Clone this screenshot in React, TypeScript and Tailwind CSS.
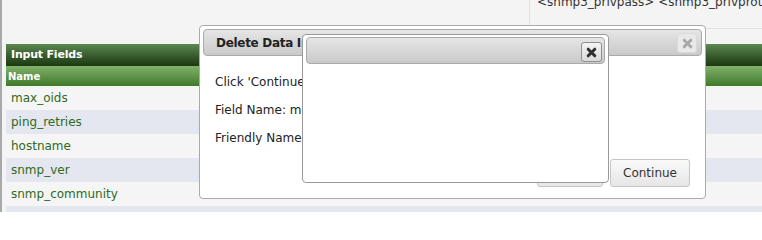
import React from "react";

function XIcon({ color }: { color: string }) {
  return (
    <svg width="11" height="11" viewBox="0 0 11 11">
      <path d="M2.2 2.2 L8.8 8.8 M8.8 2.2 L2.2 8.8" stroke={color} strokeWidth="3" strokeLinecap="round" />
    </svg>
  );
}

export default function App() {
  const rows = ["max_oids", "ping_retries", "hostname", "snmp_ver", "snmp_community", ""];
  return (
    <div className="relative w-[762px] h-[212px] overflow-hidden bg-[#f4f4f4] border-l-2 border-[#a9a9a9] font-['DejaVu_Sans',sans-serif]">
      {/* top strip */}
      <div className="flex h-[29px]">
        <div className="w-[527px]" />
        <div className="flex-1 border-l border-b border-[#e2e2e2] pl-[7px] overflow-hidden">
          <div className="mt-[-5px] text-[12px] leading-[14px] text-[#333] whitespace-nowrap">
            &lt;snmp3_privpass&gt; &lt;snmp3_privproto&gt; &lt;snmp3_context&gt;
          </div>
        </div>
      </div>
      <div className="h-[15px]" />
      {/* table */}
      <div className="ml-[4px]">
        <div className="h-[22px] flex items-center pl-[5px] bg-gradient-to-b from-[#5c8851] to-[#1b3911] text-white font-bold text-[11px] tracking-[-0.2px]">
          Input Fields
        </div>
        <div className="h-[20px] flex items-center pl-[2px] bg-gradient-to-b from-[#82b16b] to-[#3d7b28] text-white font-bold text-[10px]">
          Name
        </div>
        {rows.map((r, i) => (
          <div
            key={i}
            className={`h-[24px] flex items-center pl-[5px] text-[12px] text-[#2f6b23] ${
              i % 2 === 0 ? "bg-[#f5f5f5]" : "bg-[#e4e7ef]"
            }`}
          >
            {r}
          </div>
        ))}
      </div>

      {/* dialog 1 */}
      <div className="absolute left-[197px] top-[25px] w-[507px] h-[174px] bg-white border border-[#aaaaaa] rounded-[4px] p-[3px] flex flex-col">
        <div className="relative h-[27px] shrink-0 rounded-[4px] border border-[#aaaaaa] bg-gradient-to-b from-[#e6e6e6] to-[#c9c9c9] flex items-center pl-[12px]">
          <span className="text-[12px] font-bold text-[#222] tracking-[-0.3px]">Delete Data Input Field</span>
          <div className="absolute right-[4px] top-[3px] w-[20px] h-[20px] rounded-[3px] border border-[#dadada] bg-[#e9e9e9] flex items-center justify-center">
            <XIcon color="#a8a8a8" />
          </div>
        </div>
        <div className="pl-[12px] pt-[18px] text-[12px] leading-[16px] text-[#222]">
          <p className="mb-[12px]">Click 'Continue' to delete the following Field.</p>
          <p className="mb-[12px]">Field Name: max_oids</p>
          <p>Friendly Name: Maximum OIDs Per Get Request</p>
        </div>
        <div className="mt-auto flex justify-end gap-[7px] pr-[12px] pb-[8px]">
          <div className="w-[66px] h-[28px] rounded-[3px] border border-[#c5c5c5] bg-gradient-to-b from-[#fafafa] to-[#e8e8e8] flex items-center justify-center text-[12px] text-[#333]">
            Cancel
          </div>
          <div className="w-[80px] h-[28px] rounded-[3px] border border-[#c5c5c5] bg-gradient-to-b from-[#fafafa] to-[#e6e6e6] flex items-center justify-center text-[12px] text-[#333]">
            Continue
          </div>
        </div>
      </div>

      {/* dialog 2 */}
      <div className="absolute left-[300px] top-[34px] w-[307px] h-[149px] bg-white border border-[#999999] rounded-[4px] px-[3px] pt-[2px]">
        <div className="relative h-[27px] rounded-[4px] border border-[#aaaaaa] bg-gradient-to-b from-[#e6e6e6] to-[#c9c9c9]">
          <div className="absolute right-[2px] top-[4px] w-[21px] h-[20px] rounded-[3px] border border-[#8f8f8f] bg-gradient-to-b from-[#f4f4f4] to-[#d9d9d9] flex items-center justify-center">
            <XIcon color="#2e2e2e" />
          </div>
        </div>
      </div>
    </div>
  );
}
